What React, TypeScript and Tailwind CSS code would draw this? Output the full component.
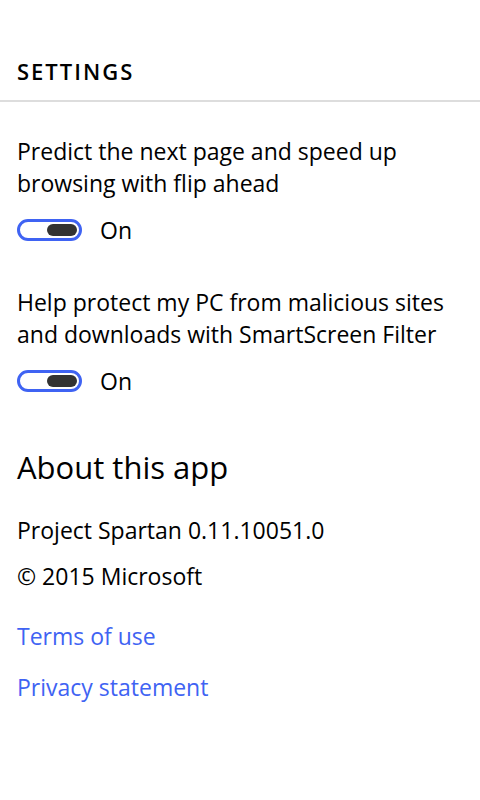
import React from 'react';

const font = { fontFamily: '"Open Sans", "Noto Sans", sans-serif' };

const Toggle = ({ on }: { on: boolean }) => (
  <div className="flex items-center h-[22px]">
    <div className="w-[65px] h-[22px] rounded-full border-[3px] border-[#3f63f3] flex items-center justify-end pr-[2px]">
      {on && <div className="w-[30px] h-[12px] rounded-full bg-[#333333]" />}
    </div>
    <span className="ml-[18px] text-[23px] text-black leading-none">{on ? 'On' : 'Off'}</span>
  </div>
);

const SettingRow = ({ label }: { label: string }) => (
  <div className="pl-[17px] pr-[20px]">
    <p className="text-[23px] leading-[32px] text-black">{label}</p>
    <div className="mt-[20px]">
      <Toggle on />
    </div>
  </div>
);

export default function App() {
  return (
    <div className="w-[480px] h-[800px] bg-white overflow-hidden" style={font}>
      <div className="pt-[58px] pb-[16px] px-[17px]">
        <h1 className="text-[22px] font-semibold tracking-[2px] leading-[26px] text-black">SETTINGS</h1>
      </div>
      <div className="h-[2px] bg-[#dddddd]" />

      <div className="pt-[33px]">
        <SettingRow label="Predict the next page and speed up browsing with flip ahead" />
      </div>
      <div className="pt-[45px]">
        <SettingRow label="Help protect my PC from malicious sites and downloads with SmartScreen Filter" />
      </div>

      <div className="px-[17px] pt-[57px]">
        <h2 className="text-[31px] leading-[36px] text-black">About this app</h2>
        <p className="mt-[29px] text-[23px] leading-[32px] text-black">Project Spartan 0.11.10051.0</p>
        <p className="mt-[14px] text-[23px] leading-[32px] text-black">© 2015 Microsoft</p>
        <div className="mt-[28px] flex flex-col gap-[19px]">
          <a className="text-[23px] leading-[32px] text-[#3f63f3]">Terms of use</a>
          <a className="text-[23px] leading-[32px] text-[#3f63f3]">Privacy statement</a>
        </div>
      </div>
    </div>
  );
}
